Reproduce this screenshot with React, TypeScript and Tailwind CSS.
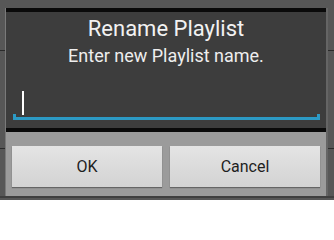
import React from "react";

const RenameDialog = () => {
  return (
    <div className="ml-[5px] mt-[8px] w-[323px] border-l border-[#7a7a7a] border-r-2 border-r-[#656565] flex flex-col">
      <div className="h-[4px] bg-[#0a0a0a]" />
      <div className="h-[116px] bg-[#3d3d3d] flex flex-col pt-[4px]">
        <h1 className="text-center text-[22px] leading-[26px] text-[#f2f2f2]">Rename Playlist</h1>
        <p className="mt-[3px] text-center text-[18px] leading-[22px] text-[#eeeeee]">Enter new Playlist name.</p>
        <div className="mt-auto mb-[8px] ml-[7px] mr-[6px]">
          <div className="h-[24px] pl-[9px]">
            <div className="w-[2px] h-[24px] bg-white" />
          </div>
          <div className="-mt-[1px] flex items-end h-[6px]">
            <div className="w-[3px] h-[6px] bg-[#2c9ac5]" />
            <div className="flex-1 h-[3px] bg-[#2c9ac5]" />
            <div className="w-[3px] h-[6px] bg-[#2c9ac5]" />
          </div>
        </div>
      </div>
      <div className="h-[4px] bg-[#0a0a0a]" />
      <div className="h-[64px] bg-[#9b9b9b] flex gap-[8px] pt-[14px] pl-[6px] pr-[6px]">
        <button className="w-[150px] h-[41px] bg-gradient-to-b from-[#e4e4e4] to-[#d3d3d3] shadow-[0_1px_1px_rgba(0,0,0,0.35)] text-[16px] text-[#1e1e1e]">
          OK
        </button>
        <button className="w-[150px] h-[41px] bg-gradient-to-b from-[#e4e4e4] to-[#d3d3d3] shadow-[0_1px_1px_rgba(0,0,0,0.35)] text-[16px] text-[#1e1e1e]">
          Cancel
        </button>
      </div>
    </div>
  );
};

const App = () => {
  return (
    <div
      className="relative w-[334px] h-[200px] overflow-hidden bg-[#575757]"
      style={{ fontFamily: "Roboto, 'Liberation Sans', sans-serif" }}
    >
      {/* divider lines of the screen behind the dialog */}
      <div className="absolute left-0 right-0 top-[50px] h-px bg-[#2a2a2a]" />
      <div className="absolute left-0 right-0 top-[148px] h-px bg-[#2a2a2a]" />
      <div className="relative">
        <RenameDialog />
      </div>
      <div className="relative h-[2px] bg-[#3f3f3f]" />
    </div>
  );
};

export default App;
